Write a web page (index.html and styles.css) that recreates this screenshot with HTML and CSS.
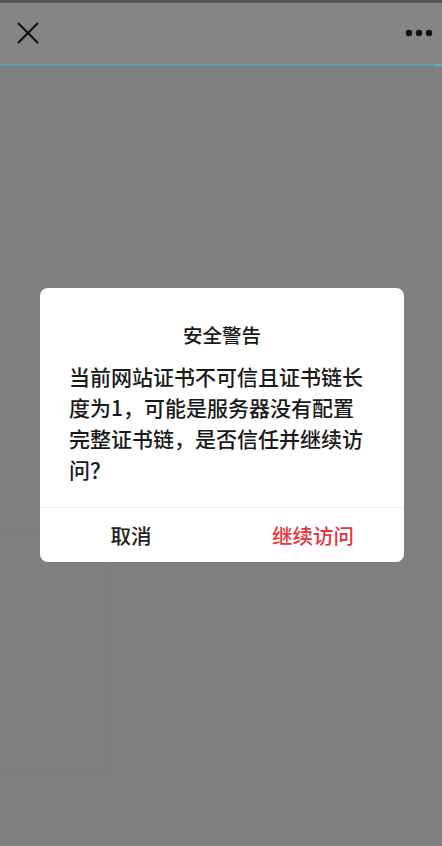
FILE: index.html
```html
<!DOCTYPE html>
<html lang="zh-CN">
<head>
<meta charset="utf-8">
<title>安全警告</title>
<link rel="stylesheet" href="styles.css">
</head>
<body>
<div class="page">
  <div class="statusbar"></div>
  <header class="navbar">
    <svg class="icon-close" width="24" height="24" viewBox="0 0 24 24">
      <path d="M2 2 L22 22 M22 2 L2 22" stroke="#121212" stroke-width="2.2" fill="none"/>
    </svg>
    <svg class="icon-more" width="28" height="8" viewBox="0 0 28 8">
      <circle cx="4" cy="4" r="3.2" fill="#121212"/>
      <circle cx="14" cy="4" r="3.2" fill="#121212"/>
      <circle cx="24" cy="4" r="3.2" fill="#121212"/>
    </svg>
  </header>
  <div class="progress"><div class="progress-tip"></div></div>
  <main class="content">
    <div class="ghost-box"></div>
  </main>
</div>
<div class="overlay">
  <div class="dialog">
    <div class="dialog-title">安全警告</div>
    <div class="dialog-body">当前网站证书不可信且证书链长度为1，可能是服务器没有配置完整证书链，是否信任并继续访问？</div>
    <div class="dialog-actions">
      <div class="btn btn-cancel">取消</div>
      <div class="btn btn-confirm">继续访问</div>
    </div>
  </div>
</div>
</body>
</html>
```

FILE: styles.css
```css
* { box-sizing: border-box; }
html, body {
  margin: 0;
  padding: 0;
  width: 442px;
  height: 846px;
  overflow: hidden;
  background: #808080;
  font-family: "Noto Sans CJK SC", "Noto Sans", sans-serif;
}
.page {
  display: flex;
  flex-direction: column;
  height: 846px;
}
.statusbar {
  height: 3px;
  background: #575757;
}
.navbar {
  height: 61px;
  background: #858585;
  display: flex;
  align-items: center;
  justify-content: space-between;
  padding: 0 9px 2px 16px;
}
.icon-close { display: block; }
.icon-more { display: block; }
.progress {
  height: 2px;
  background: #5f9aa2;
  display: flex;
  justify-content: flex-end;
}
.progress-tip {
  width: 8px;
  height: 2px;
  background: #4fb3bd;
}
.content {
  flex: 1;
  background: #7f7f7f;
  padding-top: 464px;
}
.ghost-box {
  width: 107px;
  height: 240px;
  border: 1px solid rgba(0, 0, 0, 0.02);
  border-left: none;
}
.overlay {
  position: fixed;
  left: 0;
  top: 0;
  width: 442px;
  height: 846px;
  display: flex;
  align-items: flex-start;
  justify-content: center;
  padding-top: 288px;
}
.dialog {
  width: 364px;
  height: 274px;
  background: #fff;
  border-radius: 8px;
  display: flex;
  flex-direction: column;
  margin-left: 2px;
}
.dialog-title {
  padding-top: 34px;
  font-size: 19.5px;
  line-height: 26px;
  text-align: center;
  color: #1a1a1a;
  font-weight: 500;
}
.dialog-body {
  margin-top: 13px;
  padding: 0 34px 0 29px;
  font-size: 21px;
  line-height: 31px;
  color: #1a1a1a;
  font-weight: 500;
  flex: 1;
}
.dialog-actions {
  height: 55px;
  border-top: 1px solid #f2f2f2;
  display: flex;
}
.btn {
  flex: 1;
  display: flex;
  align-items: center;
  justify-content: center;
  font-size: 20.5px;
  font-weight: 500;
}
.btn-cancel { color: #222; }
.btn-confirm { color: #e8353b; }
```
